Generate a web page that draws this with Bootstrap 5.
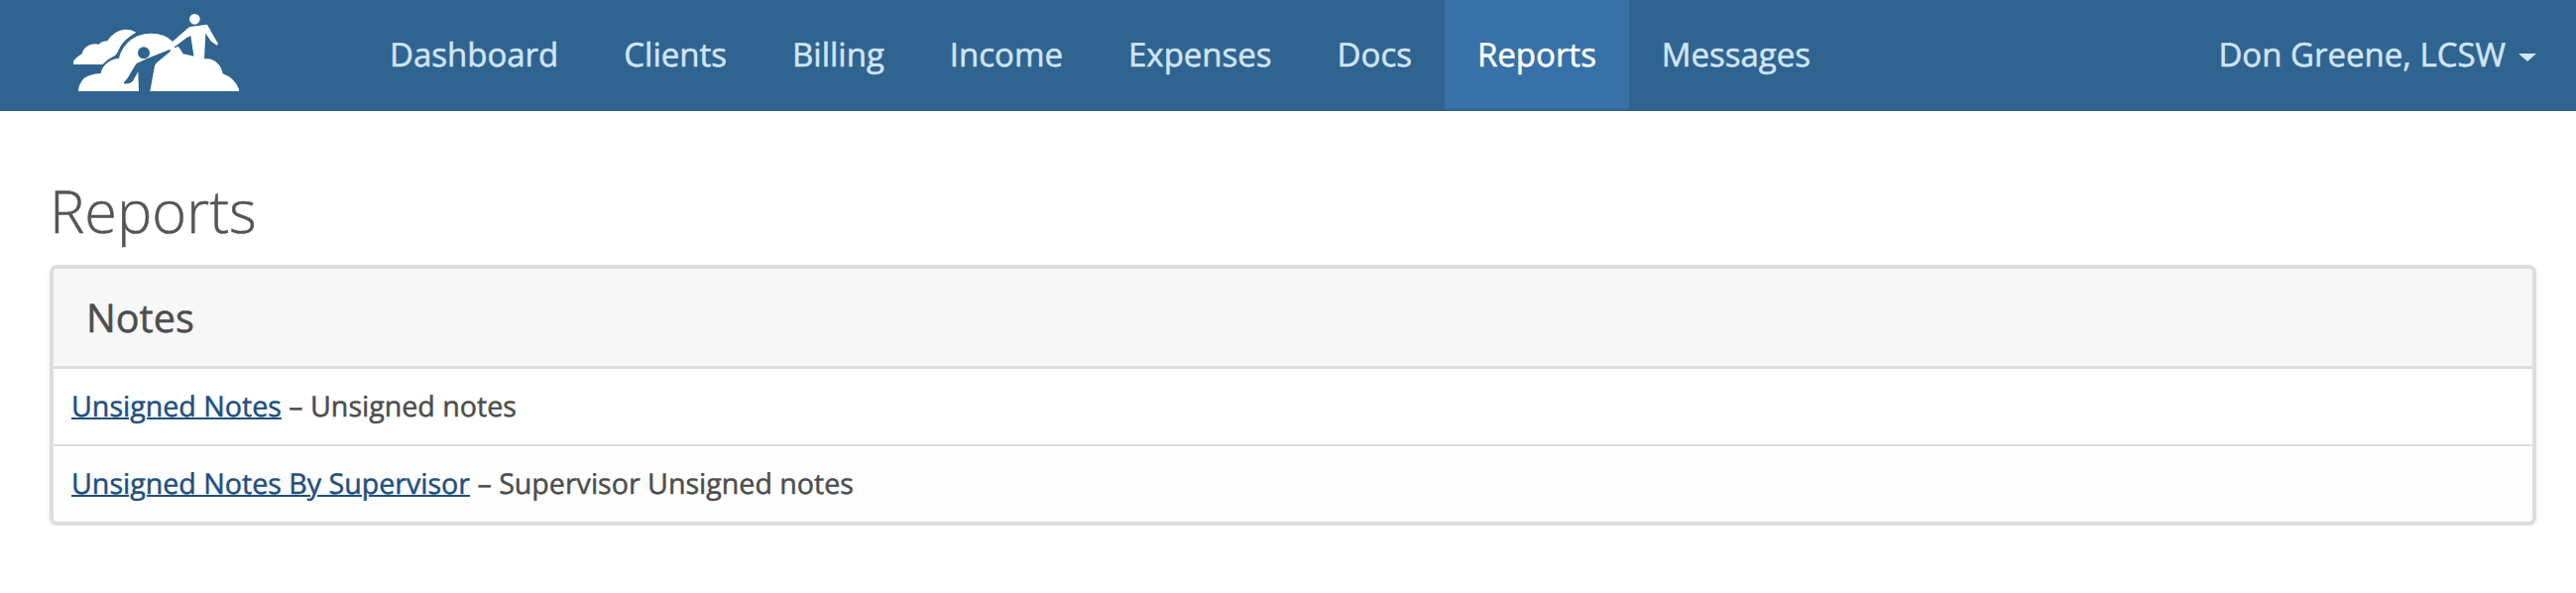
<!DOCTYPE html>
<html lang="en">
<head>
<meta charset="utf-8">
<meta name="viewport" content="width=device-width, initial-scale=1">
<title>Reports</title>
<link href="https://cdn.jsdelivr.net/npm/bootstrap@5.3.0/dist/css/bootstrap.min.css" rel="stylesheet">
<style>
body{font-family:"Open Sans",sans-serif;color:#4d4d4d;font-size:28.6px;background:#fff;-webkit-text-stroke:.5px;text-rendering:geometricPrecision}
.topbar{background:#2f6491;height:112px;font-size:33px;padding:0 40px 0 74px!important}
.topbar .navbar-brand{margin-right:119px;padding:0;line-height:0;height:78px}
.topbar .nav-link{color:#d3e6f7;height:110px;line-height:110px;padding:0 33px!important;white-space:nowrap}
.topbar .nav-link.active{background:#3871a7;color:#fff}
.topbar .account{padding:0!important}
.topbar .account::after{margin-left:13px;border-top:8px solid;border-left:9px solid transparent;border-right:9px solid transparent;border-bottom:0;vertical-align:5px}
.page{padding:65px 40px 0 50px}
.page h1{font-size:59.4px;font-weight:300;line-height:72px;margin:0 0 18px;color:#555}
.panel{border:4px solid #ddd;border-radius:8px;box-shadow:0 2px 4px rgba(0,0,0,.08)}
.panel .card-header{background:#f7f7f7;border-bottom:3px solid #ddd;height:101px;padding:0 33px;font-size:39.6px;line-height:98px;color:#4d4d4d}
.panel .list-group-item{border:0;color:#4d4d4d;padding:0 18px;height:76px;line-height:76px}
.panel .list-group-item+.list-group-item{border-top:2px solid #ddd;height:78px;background:#fdfdfd}
.panel a{color:#1f5080;text-decoration-thickness:2px}
</style>
</head>
<body>
<nav class="navbar navbar-expand topbar align-items-start">
  <a class="navbar-brand" href="#" aria-label="Home">
    <svg width="167" height="112" viewBox="42 0 501 336" fill="#fff">
      <path d="M42 195V187Q46 176 68 163Q72 141 96 134Q108 132 119 134Q130 124 145 124C158 104 176 90 202 89Q219 89 232 98C207 112 191 127 182 145Q174 164 168 168Q146 178 130 195Z"/>
      <path d="M57 276Q57 257 73 238Q90 224 125 222C129 201 145 181 180 176C190 136 224 101 277 101Q319 101 342 125L336 132L350 145L359 140Q367 149 374 163L408 170V178H452C473 181 491 201 494 223Q529 235 543 270V276Z"/>
      <path fill="#2f6491" d="M232 193L265 177L335 149V156L294 190Q288 196 287 205L274 276H240L238 217L222 245Q214 255 195 253V249Q202 242 206 236Z"/>
      <circle cx="255" cy="160" r="18" fill="#2f6491"/>
      <circle cx="409" cy="58" r="16"/>
      <path d="M334 133L389 85Q392 81 400 80L447 74L464 105L480 132L476 137L459 125L442 101L438 180H408L397 108L385 114L346 143Z"/>
    </svg>
  </a>
  <ul class="navbar-nav me-auto">
    <li class="nav-item"><a class="nav-link" href="#">Dashboard</a></li>
    <li class="nav-item"><a class="nav-link" href="#">Clients</a></li>
    <li class="nav-item"><a class="nav-link" href="#">Billing</a></li>
    <li class="nav-item"><a class="nav-link" href="#">Income</a></li>
    <li class="nav-item"><a class="nav-link" href="#">Expenses</a></li>
    <li class="nav-item"><a class="nav-link" href="#">Docs</a></li>
    <li class="nav-item"><a class="nav-link active" aria-current="page" href="#">Reports</a></li>
    <li class="nav-item"><a class="nav-link" href="#">Messages</a></li>
  </ul>
  <ul class="navbar-nav">
    <li class="nav-item dropdown"><a class="nav-link dropdown-toggle account" href="#" role="button" data-bs-toggle="dropdown">Don Greene, LCSW</a></li>
  </ul>
</nav>
<main class="page">
  <h1>Reports</h1>
  <section class="card panel">
    <div class="card-header">Notes</div>
    <ul class="list-group list-group-flush">
      <li class="list-group-item"><a href="#">Unsigned Notes</a> – Unsigned notes</li>
      <li class="list-group-item"><a href="#">Unsigned Notes By Supervisor</a> – Supervisor Unsigned notes</li>
    </ul>
  </section>
</main>
<script src="https://cdn.jsdelivr.net/npm/bootstrap@5.3.0/dist/js/bootstrap.bundle.min.js"></script>
</body>
</html>
